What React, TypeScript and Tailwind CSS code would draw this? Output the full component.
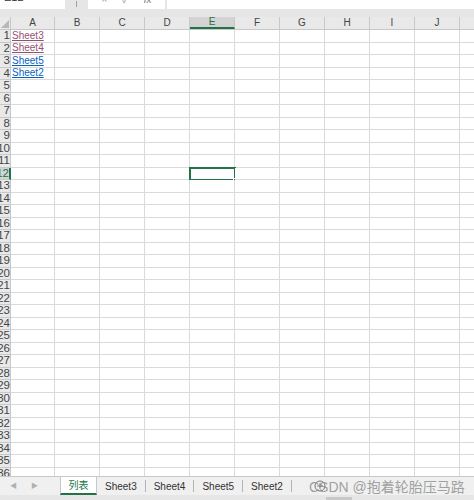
import React from "react";

const COLUMNS = ["A", "B", "C", "D", "E", "F", "G", "H", "I", "J", ""];
const COL_WIDTHS = [44, 45, 45, 45, 45, 45, 45, 45, 45, 45, 45];
const ROW_COUNT = 36;
const SELECTED_ROW = 12;
const SELECTED_COL = 4;

const LINKS: Record<number, { text: string; visited: boolean }> = {
  1: { text: "Sheet3", visited: true },
  2: { text: "Sheet4", visited: true },
  3: { text: "Sheet5", visited: false },
  4: { text: "Sheet2", visited: false },
};

const TABS = ["Sheet3", "Sheet4", "Sheet5", "Sheet2"];

function FormulaBar() {
  return (
    <div className="flex h-[9px] shrink-0 overflow-hidden bg-[#e6e6e6]">
      <div className="flex w-[65px] items-end overflow-hidden bg-white pl-[4px]">
        <span className="mb-[6px] text-[11px] leading-none text-[#333]">E12</span>
      </div>
      <div className="flex w-[23px] justify-center">
        <div className="mt-[1px] h-[6px] w-px bg-[#a0a0a0]" />
      </div>
      <div className="flex w-[77px] items-end justify-around overflow-hidden bg-white px-[6px]">
        <span className="mb-[4px] text-[10px] leading-none text-[#999]">×</span>
        <span className="mb-[4px] text-[10px] leading-none text-[#999]">✓</span>
        <span className="mb-[4px] text-[10px] italic leading-none text-[#777]">fx</span>
      </div>
      <div className="w-[2px]" />
      <div className="flex-1 bg-white" />
    </div>
  );
}

function ColumnHeader() {
  return (
    <div className="flex h-[13px] shrink-0 border-b border-[#c8c8c8] bg-[#e9e9e9]">
      <div className="relative w-[11px] shrink-0 border-r border-[#c8c8c8]">
        <svg className="absolute right-[1px] bottom-[1px]" width="8" height="8" viewBox="0 0 8 8">
          <polygon points="8,0 8,8 0,8" fill="#b8b8b8" />
        </svg>
      </div>
      {COLUMNS.map((c, i) => (
        <div
          key={i}
          style={{ width: COL_WIDTHS[i] }}
          className={`flex shrink-0 items-center justify-center border-r border-[#c8c8c8] text-[10px] leading-none text-[#444] ${
            i === SELECTED_COL ? "border-b-2 border-b-[#217346] bg-[#d3d3d3] text-[#217346]" : ""
          }`}
        >
          {c}
        </div>
      ))}
    </div>
  );
}

function Row({ n }: { n: number }) {
  const selected = n === SELECTED_ROW;
  const link = LINKS[n];
  return (
    <div className="flex h-[12.5px] shrink-0">
      <div
        className={`flex w-[11px] shrink-0 items-center justify-end overflow-hidden border-b border-r border-[#c8c8c8] text-[11.5px] leading-none text-[#444] ${
          selected ? "border-r-2 border-r-[#217346] bg-[#d3d3d3] text-[#217346]" : "bg-[#e9e9e9]"
        }`}
      >
        <span className="shrink-0 whitespace-nowrap">{n}</span>
      </div>
      {COLUMNS.map((_, i) => (
        <div
          key={i}
          style={{ width: COL_WIDTHS[i] }}
          className="relative flex shrink-0 items-center border-b border-r border-[#dadada] bg-white"
        >
          {i === 0 && link && (
            <span
              className={`pl-[1px] text-[10px] leading-none underline ${
                link.visited ? "text-[#954f72]" : "text-[#0563c1]"
              }`}
            >
              {link.text}
            </span>
          )}
          {selected && i === SELECTED_COL && (
            <div className="absolute -top-[1px] -left-[1px] h-[14px] w-[47px] border-2 border-[#217346]">
              <div className="absolute -right-[3px] -bottom-[3px] h-[4px] w-[4px] border border-white bg-[#217346]" />
            </div>
          )}
        </div>
      ))}
    </div>
  );
}

function SheetTabs() {
  return (
    <div className="relative flex h-[24px] shrink-0 flex-col border-t border-[#c8c8c8] bg-[#f0f0f0]">
      <div className="flex h-[19px] items-stretch">
        <div className="flex w-[60px] items-center gap-[14px] pl-[10px] text-[7px] text-[#b0b0b0]">
          <span>◀</span>
          <span>▶</span>
        </div>
        <div className="flex w-[37px] items-center justify-center border-x border-[#c8c8c8] border-b-2 border-b-[#217346] bg-white text-[10px] text-[#217346]">
          列表
        </div>
        {TABS.map((t) => (
          <div key={t} className="flex items-center">
            <div className="px-[8px] text-[10px] text-[#333]">{t}</div>
            <div className="h-[12px] w-px bg-[#b4b4b4]" />
          </div>
        ))}
        <div className="ml-[22px] flex items-center">
          <svg width="12" height="12" viewBox="0 0 12 12">
            <circle cx="6" cy="6" r="5" fill="none" stroke="#777" strokeWidth="1" />
            <path d="M6 3.2v5.6M3.2 6h5.6" stroke="#777" strokeWidth="1.1" />
          </svg>
        </div>
      </div>
      <div className="flex h-[5px] bg-[#e6e6e6]">
        <div className="ml-[326px] mt-[2px] h-[3px] w-[26px] bg-[#c8c8c8]" />
      </div>
      <div className="pointer-events-none absolute top-[1px] left-[309px] text-[14px] leading-[18px] text-[#8a8a8a]/80">
        CSDN @抱着轮胎压马路
      </div>
    </div>
  );
}

export default function App() {
  return (
    <div
      className="flex h-[500px] w-[474px] flex-col overflow-hidden bg-[#e6e6e6]"
      style={{ fontFamily: '"Liberation Sans", "Noto Sans CJK SC", sans-serif' }}
    >
      <FormulaBar />
      <div className="h-[8px] shrink-0 bg-[#e6e6e6]" />
      <div className="flex flex-1 flex-col overflow-hidden bg-white">
        <ColumnHeader />
        {Array.from({ length: ROW_COUNT }, (_, k) => (
          <Row key={k} n={k + 1} />
        ))}
      </div>
      <SheetTabs />
    </div>
  );
}
